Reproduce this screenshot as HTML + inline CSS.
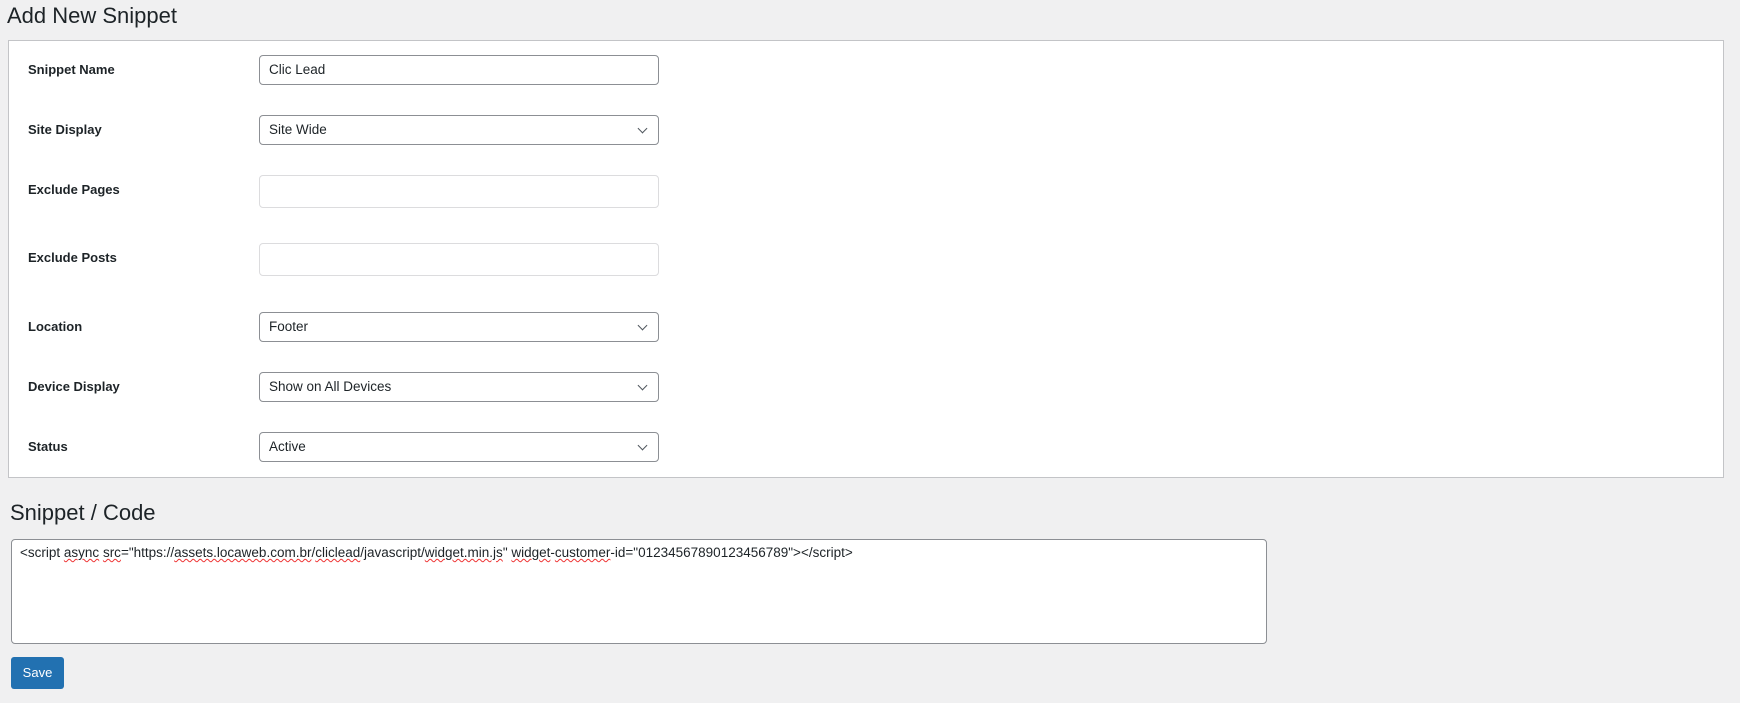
<!DOCTYPE html>
<html><head><meta charset="utf-8"><style>
*{box-sizing:border-box;margin:0;padding:0}
body{width:1740px;height:703px;background:#f0f0f1;font-family:"Liberation Sans",sans-serif;color:#1d2327;position:relative;overflow:hidden}
.h{position:absolute;font-size:22px;font-weight:400;color:#1d2327}
.panel{position:absolute;left:8px;top:40px;width:1716px;height:438px;background:#fff;border:1px solid #c3c4c7}
.lbl{position:absolute;left:28px;font-size:13px;font-weight:bold;color:#1d2327}
.in{position:absolute;left:259px;width:400px;height:30px;border:1px solid #8c8f94;border-radius:4px;background:#fff;font-size:13.5px;padding:0 9px;line-height:28px}
.in.e{border-color:#dcdcde}
.sel::after{content:"";position:absolute;right:12px;top:9px;width:6px;height:6px;border-right:1.5px solid #50575e;border-bottom:1.5px solid #50575e;transform:rotate(45deg)}
.ta{position:absolute;left:11px;top:539px;width:1256px;height:105px;border:1px solid #8c8f94;border-radius:4px;background:#fff;font-size:13.5px;padding:5px 8px}
.btn{position:absolute;left:11px;top:657px;width:53px;height:32px;background:#2271b1;border-radius:3px;color:#fff;font-size:13px;text-align:center;line-height:32px}
u{text-decoration:underline wavy #e33;text-decoration-thickness:1px}
</style></head><body>
<div class="h" style="left:7px;top:3px">Add New Snippet</div>
<div class="panel"></div>
<div class="lbl" style="top:62px">Snippet Name</div>
<div class="in" style="top:55px">Clic Lead</div>
<div class="lbl" style="top:122px">Site Display</div>
<div class="in sel" style="top:115px">Site Wide</div>
<div class="lbl" style="top:182px">Exclude Pages</div>
<div class="in e" style="top:175px;height:33px"></div>
<div class="lbl" style="top:250px">Exclude Posts</div>
<div class="in e" style="top:243px;height:33px"></div>
<div class="lbl" style="top:319px">Location</div>
<div class="in sel" style="top:312px">Footer</div>
<div class="lbl" style="top:379px">Device Display</div>
<div class="in sel" style="top:372px">Show on All Devices</div>
<div class="lbl" style="top:439px">Status</div>
<div class="in sel" style="top:432px">Active</div>
<div class="h" style="left:10px;top:500px">Snippet / Code</div>
<div class="ta">&lt;script <u>async</u> <u>src</u>="https://<u>assets.locaweb.com.br</u>/<u>cliclead</u>/javascript/<u>widget.min.js</u>" <u>widget</u>-<u>customer</u>-id="01234567890123456789"&gt;&lt;/script&gt;</div>
<div class="btn">Save</div>
</body></html>
